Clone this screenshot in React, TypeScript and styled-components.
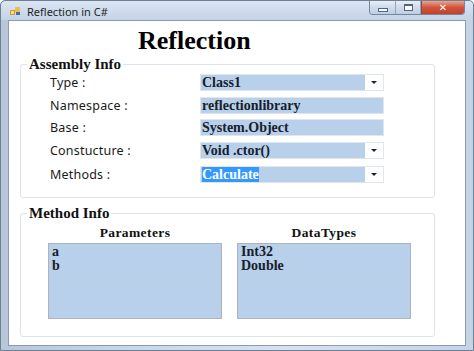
import React from 'react';
import styled, { createGlobalStyle } from 'styled-components';

const GlobalStyle = createGlobalStyle`
    html, body {
        margin: 0;
        padding: 0;
        background: #ffffff;
    }
`;

const Window = styled.div`
    width: 474px;
    height: 351px;
    box-sizing: border-box;
    display: flex;
    flex-direction: column;
    background: linear-gradient(90deg, #b7c6d8 0%, #c9d8ea 30%, #d6e2f0 60%, #c4d3e6 100%);
    border: 1px solid #6f7f94;
    border-radius: 5px 5px 0 0;
`;

const TitleBar = styled.div`
    height: 19px;
    display: flex;
    align-items: flex-start;
    padding-left: 9px;
    background: linear-gradient(180deg, #dbe6f3 0%, #c3d3e6 100%);
    border-radius: 5px 5px 0 0;
`;

const AppIcon = styled.svg`
    width: 11px;
    height: 10px;
    margin-top: 5px;
    margin-right: 6px;
`;

const Caption = styled.span`
    font-family: 'Noto Sans', 'DejaVu Sans', sans-serif;
    font-size: 11px;
    color: #1e1e1e;
    margin-top: 3px;
    flex: 1;
`;

const Controls = styled.div`
    display: flex;
    margin-right: 8px;
    border: 1px solid #74869f;
    border-top: none;
    border-radius: 0 0 4px 4px;
    overflow: hidden;
`;

const CtrlButton = styled.div<{ $close?: boolean; $w: number }>`
    width: ${(p) => p.$w}px;
    height: 13px;
    display: flex;
    align-items: center;
    justify-content: center;
    border-left: ${(p) => (p.$close ? '1px solid #8a4a45' : 'none')};
    border-right: ${(p) => (p.$close ? 'none' : '1px solid #94a6bd')};
    background: ${(p) =>
        p.$close
            ? 'linear-gradient(180deg, #e8a493 0%, #d0533c 50%, #c24228 100%)'
            : 'linear-gradient(180deg, #e7eef7 0%, #cfdbea 50%, #bfcfe3 100%)'};
    color: #ffffff;
    font-family: 'DejaVu Sans', sans-serif;
    font-size: 10px;
    font-weight: bold;
`;

const MinGlyph = styled.div`
    width: 8px;
    height: 2px;
    margin-top: 5px;
    background: #ffffff;
    border: 1px solid #4f6583;
`;

const MaxGlyph = styled.div`
    width: 7px;
    height: 4px;
    border: 1px solid #4f6583;
    border-top-width: 2px;
    background: #ffffff;
`;

const Client = styled.div`
    flex: 1;
    margin: 0 7px 4px 7px;
    background: #ffffff;
    border: 1px solid #8a9bb2;
    display: flex;
    flex-direction: column;
    padding: 0 30px 0 11px;
`;

const Heading = styled.h1`
    margin: 5px 0 0 118px;
    font-family: 'Liberation Serif', 'Times New Roman', serif;
    font-size: 26px;
    font-weight: bold;
    color: #000000;
    line-height: 30px;
`;

const Group = styled.fieldset<{ $h: number; $top: number }>`
    margin: ${(p) => p.$top}px 0 0 0;
    padding: 0;
    height: ${(p) => p.$h}px;
    box-sizing: border-box;
    border: 1px solid #dde3ea;
    border-radius: 3px;
`;

const Legend = styled.legend`
    font-family: 'Liberation Serif', 'Times New Roman', serif;
    font-size: 15px;
    font-weight: bold;
    color: #111111;
    padding: 0 2px;
    margin-left: 6px;
    line-height: 14px;
`;

const FieldRow = styled.div<{ $top: number }>`
    display: flex;
    align-items: center;
    margin-top: ${(p) => p.$top}px;
    height: 17px;
`;

const Label = styled.span`
    width: 150px;
    padding-left: 29px;
    font-family: 'Noto Sans', 'DejaVu Sans', sans-serif;
    font-size: 12.5px;
    color: #1a1a1a;
    letter-spacing: 0.2px;
`;

const Field = styled.div`
    width: 184px;
    height: 17px;
    box-sizing: border-box;
    display: flex;
    border: 1px solid #dfe6ee;
    background: #ffffff;
`;

const FieldText = styled.div`
    flex: 1;
    background: #b9d0ea;
    font-family: 'Liberation Serif', 'Times New Roman', serif;
    font-size: 14px;
    font-weight: bold;
    color: #16202c;
    line-height: 15px;
    padding-left: 1px;
    white-space: nowrap;
    overflow: hidden;
`;

const Selected = styled.span`
    background: #3399ff;
    color: #ffffff;
`;

const Arrow = styled.div`
    width: 18px;
    display: flex;
    align-items: center;
    justify-content: center;
    &::after {
        content: '';
        border-left: 3px solid transparent;
        border-right: 3px solid transparent;
        border-top: 3px solid #222222;
    }
`;

const Lists = styled.div`
    display: flex;
    padding-left: 27px;
    gap: 15px;
    margin-top: 5px;
`;

const ListCol = styled.div`
    width: 174px;
    display: flex;
    flex-direction: column;
    align-items: center;
`;

const ListTitle = styled.div`
    font-family: 'Liberation Serif', 'Times New Roman', serif;
    font-size: 13.5px;
    font-weight: bold;
    letter-spacing: 0.4px;
    color: #111111;
    line-height: 16px;
    height: 18px;
`;

const ListBox = styled.div`
    width: 174px;
    height: 76px;
    box-sizing: border-box;
    background: #b9d0ea;
    border: 1px solid #a9b4c0;
    padding: 1px 3px;
    font-family: 'Liberation Serif', 'Times New Roman', serif;
    font-size: 14px;
    font-weight: bold;
    color: #16202c;
    line-height: 14px;
`;

type FieldDef = { label: string; value: string; combo: boolean; top: number; selected?: boolean };

const fields: FieldDef[] = [
    { label: 'Type :', value: 'Class1', combo: true, top: 3 },
    { label: 'Namespace :', value: 'reflectionlibrary', combo: false, top: 6 },
    { label: 'Base :', value: 'System.Object', combo: false, top: 5 },
    { label: 'Constucture :', value: 'Void .ctor()', combo: true, top: 6 },
    { label: 'Methods :', value: 'Calculate', combo: true, top: 7, selected: true },
];

const App = () => {
    return (
        <>
            <GlobalStyle />
            <Window>
                <TitleBar>
                    <AppIcon viewBox="0 0 11 10">
                        <rect x="0" y="4" width="5" height="5" fill="#d99a2b" />
                        <rect x="5" y="1" width="5" height="5" fill="#e7c14a" />
                        <rect x="1" y="5" width="3" height="3" fill="#f4dd8a" />
                        <rect x="6" y="6" width="4" height="3" fill="#3c6fb8" />
                    </AppIcon>
                    <Caption>Reflection in C#</Caption>
                    <Controls>
                        <CtrlButton $w={25}>
                            <MinGlyph />
                        </CtrlButton>
                        <CtrlButton $w={24}>
                            <MaxGlyph />
                        </CtrlButton>
                        <CtrlButton $w={42} $close>
                            ✕
                        </CtrlButton>
                    </Controls>
                </TitleBar>
                <Client>
                    <Heading>Reflection</Heading>
                    <Group $h={141} $top={1}>
                        <Legend>Assembly Info</Legend>
                        {fields.map((f) => (
                            <FieldRow key={f.label} $top={f.top}>
                                <Label>{f.label}</Label>
                                <Field>
                                    <FieldText>
                                        {f.selected ? <Selected>{f.value}</Selected> : f.value}
                                    </FieldText>
                                    {f.combo && <Arrow />}
                                </Field>
                            </FieldRow>
                        ))}
                    </Group>
                    <Group $h={131} $top={8}>
                        <Legend>Method Info</Legend>
                        <Lists>
                            <ListCol>
                                <ListTitle>Parameters</ListTitle>
                                <ListBox>
                                    a
                                    <br />b
                                </ListBox>
                            </ListCol>
                            <ListCol>
                                <ListTitle>DataTypes</ListTitle>
                                <ListBox>
                                    Int32
                                    <br />
                                    Double
                                </ListBox>
                            </ListCol>
                        </Lists>
                    </Group>
                </Client>
            </Window>
        </>
    );
};

export default App;
